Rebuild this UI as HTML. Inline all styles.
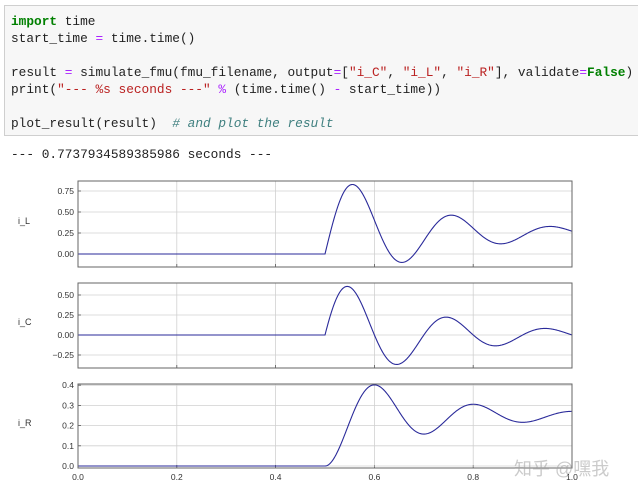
<!DOCTYPE html>
<html><head><meta charset="utf-8"><style>
body{margin:0;width:638px;height:493px;background:#fff;overflow:hidden;position:relative;font-family:"Liberation Sans",sans-serif}
.code{position:absolute;left:4px;top:5px;width:640px;height:131px;background:#f7f7f7;border:1px solid #cfcfcf;box-sizing:border-box}
pre{margin:0;font-family:"Liberation Mono","DejaVu Sans Mono",monospace;font-size:12.8px;line-height:17px;color:#222}
.code pre{position:absolute;left:6px;top:7px}
.k{color:#008000;font-weight:bold}.o{color:#aa22ff}.s{color:#ba2121}.c{color:#408080;font-style:italic}
.out{position:absolute;left:11px;top:146px}
svg{position:absolute;left:0;top:0}
</style></head><body>
<div class="code"><pre><span class="k">import</span> time
start_time <span class="o">=</span> time.time()

result <span class="o">=</span> simulate_fmu(fmu_filename, output<span class="o">=</span>[<span class="s">"i_C"</span>, <span class="s">"i_L"</span>, <span class="s">"i_R"</span>], validate<span class="o">=</span><span class="k">False</span>)
print(<span class="s">"--- %s seconds ---"</span> <span class="o">%</span> (time.time() <span class="o">-</span> start_time))

plot_result(result)  <span class="c"># and plot the result</span></pre></div>
<pre class="out">--- 0.7737934589385986 seconds ---</pre>
<svg id="g" width="638" height="493" font-family="Liberation Sans, sans-serif" font-size="8.5" fill="#333"></svg>
<div style="position:absolute;left:514px;top:455px;font-family:'Liberation Sans','Noto Sans CJK SC',sans-serif;font-size:18px;color:rgba(160,160,160,0.55)">知乎 @嘿我</div>
<script>
var X0=78,X1=572;
var a=5.0,w=31.4;
function iR(t){if(t<.5)return 0;var u=t-.5;return .25*(1-Math.exp(-a*u)*(Math.cos(w*u)+a/w*Math.sin(w*u)));}
function iC(t){if(t<.5)return 0;var u=t-.5;return .77*Math.exp(-a*u)*Math.sin(w*u);}
function iL(t){return iR(t)+iC(t);}
var plots=[
 {f:iL,top:181,bot:267,y0:254,sc:84,ticks:[[0.75,"0.75"],[0.5,"0.50"],[0.25,"0.25"],[0,"0.00"]],lab:"i_L",ly:224,xl:false},
 {f:iC,top:283,bot:368,y0:335,sc:80,ticks:[[0.5,"0.50"],[0.25,"0.25"],[0,"0.00"],[-0.25,"\u22120.25"]],lab:"i_C",ly:325,xl:false},
 {f:iR,top:384,bot:468,y0:466,sc:202,ticks:[[0.4,"0.4"],[0.3,"0.3"],[0.2,"0.2"],[0.1,"0.1"],[0,"0.0"]],lab:"i_R",ly:426,xl:true}
];
var s="";
plots.forEach(function(p){
 for(var i=1;i<5;i++){var x=X0+i*(X1-X0)/5;s+='<line x1="'+x+'" x2="'+x+'" y1="'+p.top+'" y2="'+p.bot+'" stroke="#d0d0d0" stroke-width="0.8"/>';
  s+='<line x1="'+x+'" x2="'+x+'" y1="'+(p.bot-3)+'" y2="'+p.bot+'" stroke="#555" stroke-width="0.8"/>';}
 p.ticks.forEach(function(t){var y=p.y0-t[0]*p.sc;s+='<line x1="'+X0+'" x2="'+X1+'" y1="'+y+'" y2="'+y+'" stroke="#d0d0d0" stroke-width="0.8"/>';
  s+='<line x1="'+X0+'" x2="'+(X0+3)+'" y1="'+y+'" y2="'+y+'" stroke="#555" stroke-width="0.8"/>';
  s+='<text x="'+(X0-4)+'" y="'+(y+3)+'" text-anchor="end">'+t[1]+'</text>';});
 var d="";for(var k=0;k<=1000;k++){var t=k/1000;var x=X0+t*(X1-X0);var y=p.y0-p.f(t)*p.sc;d+=(k?"L":"M")+x.toFixed(2)+","+y.toFixed(2);}
 s+='<path d="'+d+'" fill="none" stroke="#2a2a9a" stroke-width="1.1"/>';
 s+='<rect x="'+X0+'" y="'+p.top+'" width="'+(X1-X0)+'" height="'+(p.bot-p.top)+'" fill="none" stroke="#666" stroke-width="1"/>';
 s+='<text x="18" y="'+p.ly+'" font-size="9">'+p.lab+'</text>';
 if(p.xl){["0.0","0.2","0.4","0.6","0.8","1.0"].forEach(function(l,i){s+='<text x="'+(X0+i*(X1-X0)/5)+'" y="480" text-anchor="middle">'+l+'</text>';});}
});
document.getElementById("g").innerHTML=s;
</script>
</body></html>
